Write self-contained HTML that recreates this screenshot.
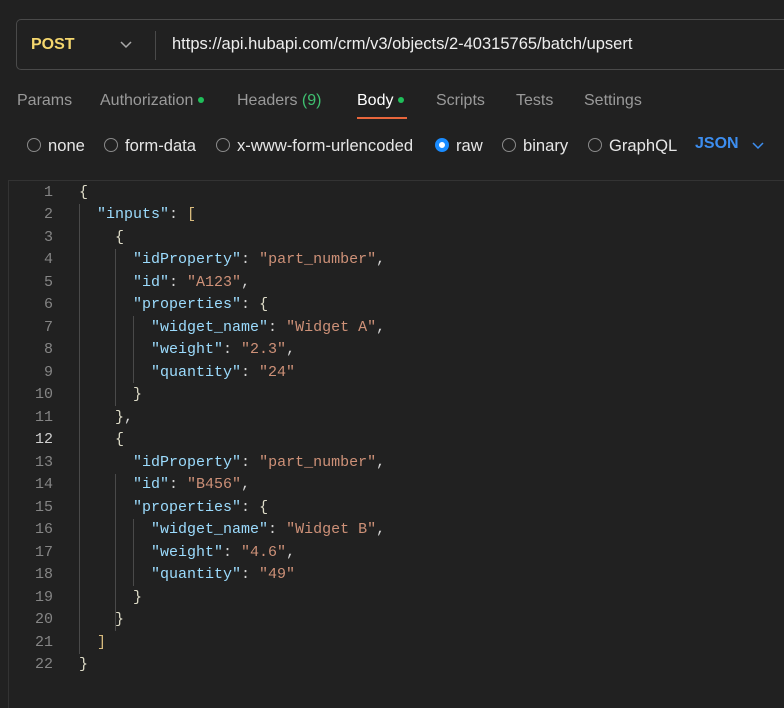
<!DOCTYPE html>
<html><head><style>
body{margin:0;background:#212121;width:784px;height:708px;overflow:hidden;font-family:"Liberation Sans",sans-serif;position:relative}
.abs{position:absolute}
.url{left:16px;top:19px;width:790px;height:51px;border:1px solid #4a4a4a;border-radius:5px;box-sizing:border-box}
.tab{top:92px;font-size:16px;color:#9a9a9a}
.dot{display:inline-block;width:6px;height:6px;border-radius:50%;background:#1fbf5a;margin-left:5px;vertical-align:middle;position:relative;top:-1px}
.r{top:136px;font-size:16.6px;color:#e6e6e6}
.rb{display:inline-block;width:14px;height:14px;border:1px solid #8a8a8a;border-radius:50%;box-sizing:border-box;vertical-align:middle;margin-right:7px;position:relative;top:-2px}
.code{font-family:"Liberation Mono",monospace;font-size:15px;line-height:22.48px;white-space:pre}
.ln{left:20px;top:182px;width:33px;text-align:right;color:#858585}
.src{left:79px;top:182px;color:#d4d4d4}
.k{color:#9cdcfe}.s{color:#ce9178}.b{color:#dedcc8}.q{color:#d7ba7d}
.g{width:1px;background:#4a4a4a}
</style></head><body>
<div class="abs url"></div>
<div class="abs" style="left:31px;top:36px;font-size:16px;font-weight:bold;color:#f5d76e">POST</div>
<svg class="abs" style="left:120px;top:41px" width="12" height="8"><path d="M1 1l5 5 5-5" stroke="#aaa" stroke-width="1.5" fill="none"/></svg>
<div class="abs" style="left:155px;top:31px;width:1px;height:29px;background:#4a4a4a"></div>
<div class="abs" style="left:172px;top:35px;font-size:16.5px;color:#eee">https://api.hubapi.com/crm/v3/objects/2-40315765/batch/upsert</div>

<div class="abs tab" style="left:17px">Params</div>
<div class="abs tab" style="left:100px">Authorization<span class="dot"></span></div>
<div class="abs tab" style="left:237px">Headers <span style="color:#3fc070">(9)</span></div>
<div class="abs tab" style="left:357px;color:#fff">Body<span class="dot"></span></div>
<div class="abs" style="left:357px;top:117px;width:50px;height:2px;background:#e8663c"></div>
<div class="abs tab" style="left:436px">Scripts</div>
<div class="abs tab" style="left:516px">Tests</div>
<div class="abs tab" style="left:584px">Settings</div>

<div class="abs r" style="left:27px"><span class="rb"></span>none</div>
<div class="abs r" style="left:104px"><span class="rb"></span>form-data</div>
<div class="abs r" style="left:216px"><span class="rb"></span>x-www-form-urlencoded</div>
<div class="abs r" style="left:435px"><span class="rb" style="border:4px solid #1a8cff;background:#fff"></span>raw</div>
<div class="abs r" style="left:502px"><span class="rb"></span>binary</div>
<div class="abs r" style="left:588px"><span class="rb"></span>GraphQL</div>
<div class="abs" style="left:695px;top:135px;font-size:16px;font-weight:bold;color:#3d8ef0">JSON</div>
<svg class="abs" style="left:752px;top:142px" width="12" height="8"><path d="M1 1l5 5 5-5" stroke="#3d8ef0" stroke-width="1.5" fill="none"/></svg>

<div class="abs" style="left:8px;top:180px;width:776px;height:1px;background:#333"></div>
<div class="abs" style="left:8px;top:180px;width:1px;height:528px;background:#333"></div>

<div class="abs g" style="left:79px;top:204px;height:450px"></div>
<div class="abs g" style="left:115px;top:249px;height:157px"></div>
<div class="abs g" style="left:115px;top:474px;height:157px"></div>
<div class="abs g" style="left:133px;top:316px;height:67px"></div>
<div class="abs g" style="left:133px;top:519px;height:67px"></div>

<div class="abs code ln">1
2
3
4
5
6
7
8
9
10
11
<span style="color:#d0d0d0">12</span>
13
14
15
16
17
18
19
20
21
22</div>
<div class="abs code src"><span class="b">{</span>
  <span class="k">"inputs"</span>: <span class="q">[</span>
    <span class="b">{</span>
      <span class="k">"idProperty"</span>: <span class="s">"part_number"</span>,
      <span class="k">"id"</span>: <span class="s">"A123"</span>,
      <span class="k">"properties"</span>: <span class="b">{</span>
        <span class="k">"widget_name"</span>: <span class="s">"Widget A"</span>,
        <span class="k">"weight"</span>: <span class="s">"2.3"</span>,
        <span class="k">"quantity"</span>: <span class="s">"24"</span>
      <span class="b">}</span>
    <span class="b">}</span>,
    <span class="b">{</span>
      <span class="k">"idProperty"</span>: <span class="s">"part_number"</span>,
      <span class="k">"id"</span>: <span class="s">"B456"</span>,
      <span class="k">"properties"</span>: <span class="b">{</span>
        <span class="k">"widget_name"</span>: <span class="s">"Widget B"</span>,
        <span class="k">"weight"</span>: <span class="s">"4.6"</span>,
        <span class="k">"quantity"</span>: <span class="s">"49"</span>
      <span class="b">}</span>
    <span class="b">}</span>
  <span class="q">]</span>
<span class="b">}</span></div>
</body></html>
